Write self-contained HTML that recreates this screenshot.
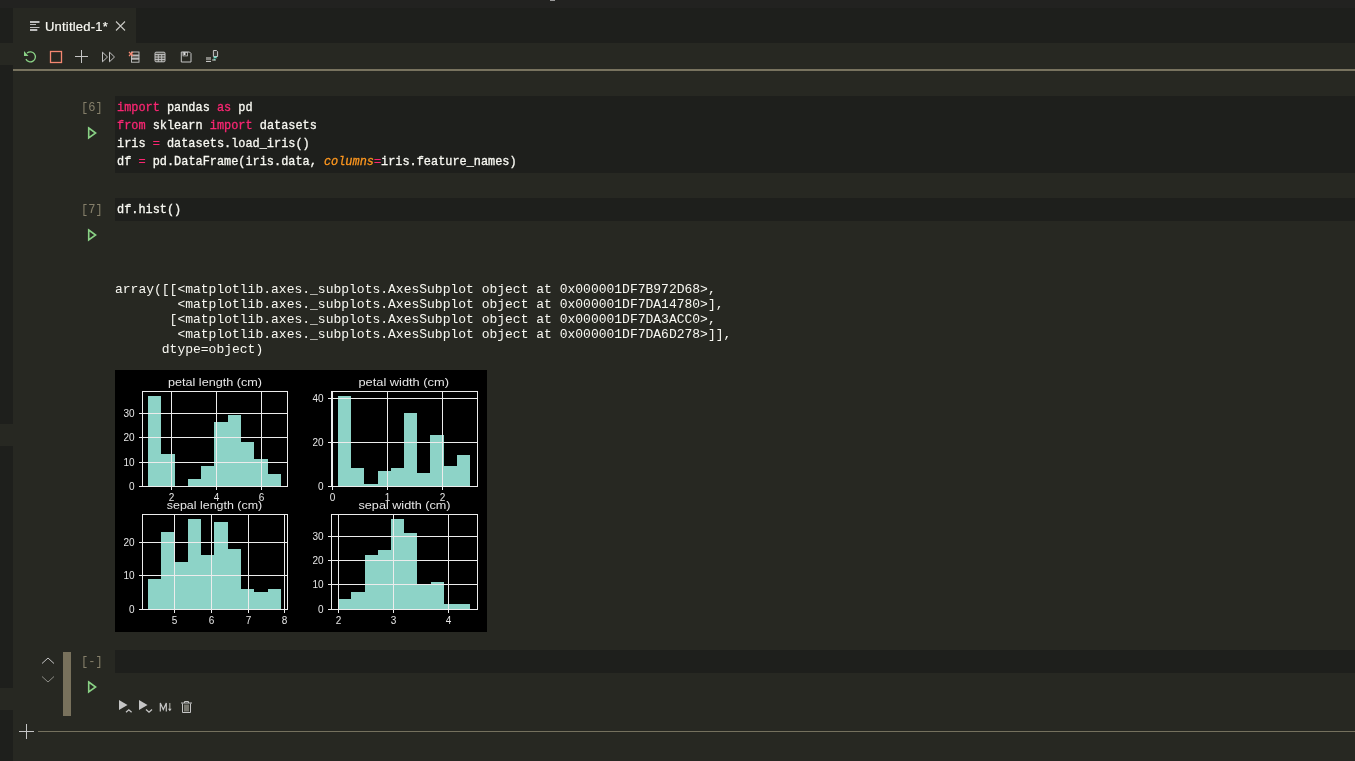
<!DOCTYPE html>
<html><head><meta charset="utf-8"><title>Untitled-1</title>
<style>
html,body{margin:0;padding:0}
body{width:1355px;height:761px;overflow:hidden;position:relative;background:#272822;font-family:"Liberation Sans",sans-serif}
.a{position:absolute}
.t1,.code,.out,.cnt,.chart text{will-change:transform}
.code{position:absolute;font-family:"Liberation Mono",monospace;font-size:11.9px;line-height:18px;color:#f8f8f2;white-space:pre;-webkit-text-stroke:0.3px currentColor}
.k{color:#f92672}
.p{color:#fd971f;font-style:italic}
.out{position:absolute;font-family:"Liberation Mono",monospace;font-size:13px;line-height:15px;color:#f8f8f2;white-space:pre}
.cnt{position:absolute;font-family:"Liberation Mono",monospace;font-size:12px;line-height:14px;color:#857f6a;white-space:pre}
.chart rect{shape-rendering:crispEdges}
.chart text{font-family:"Liberation Sans",sans-serif;font-size:10px;fill:#e6e6e6}
.chart text.t{font-size:11px}
svg{display:block}
.gs{will-change:transform}
</style></head><body>
<!-- title strip -->
<div class="a" style="left:0;top:0;width:1355px;height:8px;background:#222220"></div>
<div class="a" style="left:550px;top:0;width:5px;height:1px;background:#9a9a9a"></div>
<!-- tab bar -->
<div class="a" style="left:0;top:8px;width:1355px;height:35px;background:#1e1f1c"></div>
<div class="a" style="left:13px;top:8px;width:123px;height:35px;background:#272822"></div>
<svg class="a" style="left:30px;top:21px" width="10" height="10"><rect x="0" y="0" width="9.5" height="2" fill="#bdbdbd"/><rect x="0" y="3" width="6" height="1" fill="#bdbdbd"/><rect x="0" y="6" width="9.5" height="1" fill="#bdbdbd"/><rect x="0" y="8" width="7.3" height="2" fill="#bdbdbd"/></svg>
<div class="a t1" style="left:45px;top:17px;font-size:13px;line-height:20px;letter-spacing:0.2px;color:#f8f8f2;-webkit-text-stroke:0.2px currentColor">Untitled-1*</div>
<svg class="a" style="left:115px;top:21px" width="11" height="10"><path d="M1 0.5L10 9.5M10 0.5L1 9.5" stroke="#c8c8c4" stroke-width="1.1" fill="none"/></svg>
<!-- left strip -->
<div class="a" style="left:0;top:8px;width:13px;height:753px;background:#1e1f1c"></div>
<div class="a" style="left:0;top:43px;width:13px;height:22px;background:#272822"></div>
<div class="a" style="left:0;top:424px;width:13px;height:22px;background:#272822"></div>
<div class="a" style="left:0;top:688px;width:13px;height:22px;background:#272822"></div>
<!-- toolbar line -->
<div class="a" style="left:13px;top:69px;width:1342px;height:2px;background:#78735f"></div>
<!-- toolbar icons -->
<svg class="a" style="left:22px;top:49px" width="16" height="16" viewBox="0 0 16 16">
 <path d="M5.1 4.1 A5 5 0 1 1 3.9 10.1" stroke="#89d185" stroke-width="1.3" fill="none"/>
 <path d="M2 2 L2 7 L6.5 7 Z" fill="#89d185"/>
</svg>
<svg class="a" style="left:49px;top:50px" width="14" height="14"><rect x="1.5" y="1.5" width="11" height="11" stroke="#f48771" stroke-width="1.3" fill="none"/></svg>
<svg class="a" style="left:74px;top:49px" width="15" height="15"><rect x="7" y="1" width="1" height="13" fill="#c5c5c5"/><rect x="1" y="7" width="13" height="1" fill="#c5c5c5"/></svg>
<svg class="a" style="left:100px;top:51px" width="17" height="12" viewBox="0 0 17 12"><path d="M2.5 1.2 L7.5 6 L2.5 10.8 Z M9.5 1.2 L14.5 6 L9.5 10.8 Z" stroke="#c5c5c5" stroke-width="1" fill="none"/></svg>
<svg class="a" style="left:128px;top:51px" width="12" height="12" viewBox="0 0 12 12">
 <rect x="3.5" y="1" width="7.5" height="3" stroke="#c5c5c5" stroke-width="0.9" fill="none"/>
 <rect x="3.5" y="4.6" width="7.5" height="3" stroke="#c5c5c5" stroke-width="0.9" fill="#6a6a66"/>
 <rect x="3.5" y="8.2" width="7.5" height="3" stroke="#c5c5c5" stroke-width="0.9" fill="none"/>
 <path d="M1 1 L5 5 M5 1 L1 5" stroke="#f48771" stroke-width="1.3"/>
</svg>
<svg class="a" style="left:154px;top:51px" width="12" height="12" viewBox="0 0 12 12">
 <rect x="1" y="1.2" width="10" height="9.6" rx="1" stroke="#c5c5c5" stroke-width="1" fill="#55554f"/>
 <path d="M1 3.5H11M1 6H11M1 8.5H11M4.3 3.5V10.8M7.7 3.5V10.8" stroke="#c5c5c5" stroke-width="0.9"/>
</svg>
<svg class="a" style="left:180px;top:51px" width="12" height="12" viewBox="0 0 12 12">
 <path d="M1.3 1 H9.5 L11 2.5 V11 H1.3 Z" stroke="#c5c5c5" stroke-width="1" fill="none"/>
 <rect x="3" y="1.3" width="4.5" height="3.6" stroke="#c5c5c5" stroke-width="0.8" fill="none"/>
 <rect x="3.5" y="1.5" width="2" height="2.5" fill="#e0e0e0"/>
</svg>
<svg class="a" style="left:205px;top:49px" width="14" height="14" viewBox="0 0 14 14">
 <path d="M8.4 1.5 H11.5 L12.6 2.6 V7.5 H8.4 Z" stroke="#c5c5c5" stroke-width="1" fill="#3a3a36"/>
 <rect x="1" y="8" width="5" height="3.2" fill="#85857f"/>
 <rect x="1" y="12" width="5" height="1" fill="#c5c5c5"/>
 <path d="M7.8 9.2 L10.2 7 L12.4 9.2 Z" fill="#6fdcc8"/>
 <rect x="7.2" y="10" width="3.6" height="2" fill="#85857f"/>
 <circle cx="9.5" cy="10.5" r="0.8" fill="#6fdcc8"/>
</svg>

<!-- cell 1 -->
<div class="a" style="left:115px;top:96px;width:1240px;height:77px;background:#1e1f1c"></div>
<div class="cnt" style="left:81px;top:101px">[6]</div>
<svg class="a" style="left:87px;top:126px" width="11" height="14" viewBox="0 0 11 14"><path d="M1.7 2 L8.6 7 L1.7 12 Z" stroke="#89d185" stroke-width="1.6" stroke-linejoin="miter" fill="none"/></svg>
<div class="code" style="left:117px;top:99px"><span class="k">import</span> pandas <span class="k">as</span> pd
<span class="k">from</span> sklearn <span class="k">import</span> datasets
iris <span class="k">=</span> datasets.load_iris()
df <span class="k">=</span> pd.DataFrame(iris.data, <span class="p">columns</span><span class="k">=</span>iris.feature_names)</div>

<!-- cell 2 -->
<div class="a" style="left:115px;top:198px;width:1240px;height:23px;background:#1e1f1c"></div>
<div class="cnt" style="left:81px;top:203px">[7]</div>
<svg class="a" style="left:87px;top:228px" width="11" height="14" viewBox="0 0 11 14"><path d="M1.7 2 L8.6 7 L1.7 12 Z" stroke="#89d185" stroke-width="1.6" stroke-linejoin="miter" fill="none"/></svg>
<div class="code" style="left:117px;top:201px">df.hist()</div>

<div class="out" style="left:115px;top:282px">array([[&lt;matplotlib.axes._subplots.AxesSubplot object at 0x000001DF7B972D68&gt;,
        &lt;matplotlib.axes._subplots.AxesSubplot object at 0x000001DF7DA14780&gt;],
       [&lt;matplotlib.axes._subplots.AxesSubplot object at 0x000001DF7DA3ACC0&gt;,
        &lt;matplotlib.axes._subplots.AxesSubplot object at 0x000001DF7DA6D278&gt;]],
      dtype=object)</div>

<div class="a" style="left:115px;top:370px"><svg class="chart" width="372" height="262" viewBox="115 370 372 262" shape-rendering="crispEdges"><rect x="115" y="370" width="372" height="262" fill="#000"/><g font-family="Liberation Sans, sans-serif" font-size="10" fill="#e8e8e8" shape-rendering="auto"><rect x="148.00" y="396.00" width="13.00" height="91.00" fill="#8dd3c7"/><rect x="161.00" y="454.00" width="14.00" height="33.00" fill="#8dd3c7"/><rect x="188.00" y="479.00" width="13.00" height="8.00" fill="#8dd3c7"/><rect x="201.00" y="466.00" width="13.00" height="21.00" fill="#8dd3c7"/><rect x="214.00" y="422.00" width="14.00" height="65.00" fill="#8dd3c7"/><rect x="228.00" y="415.00" width="13.00" height="72.00" fill="#8dd3c7"/><rect x="241.00" y="442.00" width="13.00" height="45.00" fill="#8dd3c7"/><rect x="254.00" y="459.00" width="14.00" height="28.00" fill="#8dd3c7"/><rect x="268.00" y="474.00" width="13.00" height="13.00" fill="#8dd3c7"/><rect x="171" y="391" width="1" height="96" fill="#ececec"/><rect x="171" y="486" width="1" height="4" fill="#ececec"/><text x="171.5" y="501" text-anchor="middle">2</text><rect x="216" y="391" width="1" height="96" fill="#ececec"/><rect x="216" y="486" width="1" height="4" fill="#ececec"/><text x="216.5" y="501" text-anchor="middle">4</text><rect x="261" y="391" width="1" height="96" fill="#ececec"/><rect x="261" y="486" width="1" height="4" fill="#ececec"/><text x="261.5" y="501" text-anchor="middle">6</text><rect x="142" y="486" width="146" height="1" fill="#ececec"/><rect x="139" y="486" width="4" height="1" fill="#ececec"/><text x="134.5" y="490" text-anchor="end">0</text><rect x="142" y="462" width="146" height="1" fill="#ececec"/><rect x="139" y="462" width="4" height="1" fill="#ececec"/><text x="134.5" y="466" text-anchor="end">10</text><rect x="142" y="437" width="146" height="1" fill="#ececec"/><rect x="139" y="437" width="4" height="1" fill="#ececec"/><text x="134.5" y="441" text-anchor="end">20</text><rect x="142" y="413" width="146" height="1" fill="#ececec"/><rect x="139" y="413" width="4" height="1" fill="#ececec"/><text x="134.5" y="417" text-anchor="end">30</text><rect x="142" y="391" width="1" height="96" fill="#ececec"/><rect x="287" y="391" width="1" height="96" fill="#ececec"/><rect x="142" y="391" width="146" height="1" fill="#ececec"/><rect x="142" y="486" width="146" height="1" fill="#ececec"/><text class="t" x="215" y="386" text-anchor="middle" textLength="94" lengthAdjust="spacingAndGlyphs">petal length (cm)</text><rect x="338.00" y="396.00" width="13.00" height="91.00" fill="#8dd3c7"/><rect x="351.00" y="468.00" width="13.00" height="19.00" fill="#8dd3c7"/><rect x="364.00" y="484.00" width="14.00" height="3.00" fill="#8dd3c7"/><rect x="378.00" y="471.00" width="13.00" height="16.00" fill="#8dd3c7"/><rect x="391.00" y="468.00" width="13.00" height="19.00" fill="#8dd3c7"/><rect x="404.00" y="413.00" width="13.00" height="74.00" fill="#8dd3c7"/><rect x="417.00" y="473.00" width="13.00" height="14.00" fill="#8dd3c7"/><rect x="430.00" y="435.00" width="14.00" height="52.00" fill="#8dd3c7"/><rect x="444.00" y="466.00" width="13.00" height="21.00" fill="#8dd3c7"/><rect x="457.00" y="455.00" width="13.00" height="32.00" fill="#8dd3c7"/><rect x="332" y="391" width="1" height="96" fill="#ececec"/><rect x="332" y="486" width="1" height="4" fill="#ececec"/><text x="332.5" y="501" text-anchor="middle">0</text><rect x="387" y="391" width="1" height="96" fill="#ececec"/><rect x="387" y="486" width="1" height="4" fill="#ececec"/><text x="387.5" y="501" text-anchor="middle">1</text><rect x="442" y="391" width="1" height="96" fill="#ececec"/><rect x="442" y="486" width="1" height="4" fill="#ececec"/><text x="442.5" y="501" text-anchor="middle">2</text><rect x="331" y="486" width="147" height="1" fill="#ececec"/><rect x="328" y="486" width="4" height="1" fill="#ececec"/><text x="323.5" y="490" text-anchor="end">0</text><rect x="331" y="442" width="147" height="1" fill="#ececec"/><rect x="328" y="442" width="4" height="1" fill="#ececec"/><text x="323.5" y="446" text-anchor="end">20</text><rect x="331" y="398" width="147" height="1" fill="#ececec"/><rect x="328" y="398" width="4" height="1" fill="#ececec"/><text x="323.5" y="402" text-anchor="end">40</text><rect x="331" y="391" width="1" height="96" fill="#ececec"/><rect x="477" y="391" width="1" height="96" fill="#ececec"/><rect x="331" y="391" width="147" height="1" fill="#ececec"/><rect x="331" y="486" width="147" height="1" fill="#ececec"/><text class="t" x="403.7" y="386" text-anchor="middle" textLength="90.5" lengthAdjust="spacingAndGlyphs">petal width (cm)</text><rect x="148.00" y="579.00" width="13.00" height="31.00" fill="#8dd3c7"/><rect x="161.00" y="532.00" width="14.00" height="78.00" fill="#8dd3c7"/><rect x="175.00" y="562.00" width="13.00" height="48.00" fill="#8dd3c7"/><rect x="188.00" y="519.00" width="13.00" height="91.00" fill="#8dd3c7"/><rect x="201.00" y="555.00" width="13.00" height="55.00" fill="#8dd3c7"/><rect x="214.00" y="522.00" width="14.00" height="88.00" fill="#8dd3c7"/><rect x="228.00" y="549.00" width="13.00" height="61.00" fill="#8dd3c7"/><rect x="241.00" y="589.00" width="13.00" height="21.00" fill="#8dd3c7"/><rect x="254.00" y="592.00" width="14.00" height="18.00" fill="#8dd3c7"/><rect x="268.00" y="589.00" width="13.00" height="21.00" fill="#8dd3c7"/><rect x="174" y="514" width="1" height="96" fill="#ececec"/><rect x="174" y="609" width="1" height="4" fill="#ececec"/><text x="174.5" y="624" text-anchor="middle">5</text><rect x="211" y="514" width="1" height="96" fill="#ececec"/><rect x="211" y="609" width="1" height="4" fill="#ececec"/><text x="211.5" y="624" text-anchor="middle">6</text><rect x="248" y="514" width="1" height="96" fill="#ececec"/><rect x="248" y="609" width="1" height="4" fill="#ececec"/><text x="248.5" y="624" text-anchor="middle">7</text><rect x="284" y="514" width="1" height="96" fill="#ececec"/><rect x="284" y="609" width="1" height="4" fill="#ececec"/><text x="284.5" y="624" text-anchor="middle">8</text><rect x="142" y="609" width="146" height="1" fill="#ececec"/><rect x="139" y="609" width="4" height="1" fill="#ececec"/><text x="134.5" y="613" text-anchor="end">0</text><rect x="142" y="575" width="146" height="1" fill="#ececec"/><rect x="139" y="575" width="4" height="1" fill="#ececec"/><text x="134.5" y="579" text-anchor="end">10</text><rect x="142" y="542" width="146" height="1" fill="#ececec"/><rect x="139" y="542" width="4" height="1" fill="#ececec"/><text x="134.5" y="546" text-anchor="end">20</text><rect x="142" y="514" width="1" height="96" fill="#ececec"/><rect x="287" y="514" width="1" height="96" fill="#ececec"/><rect x="142" y="514" width="146" height="1" fill="#ececec"/><rect x="142" y="609" width="146" height="1" fill="#ececec"/><text class="t" x="214.5" y="509" text-anchor="middle" textLength="95.5" lengthAdjust="spacingAndGlyphs">sepal length (cm)</text><rect x="338.00" y="599.00" width="13.00" height="11.00" fill="#8dd3c7"/><rect x="351.00" y="592.00" width="14.00" height="18.00" fill="#8dd3c7"/><rect x="365.00" y="555.00" width="13.00" height="55.00" fill="#8dd3c7"/><rect x="378.00" y="550.00" width="13.00" height="60.00" fill="#8dd3c7"/><rect x="391.00" y="519.00" width="13.00" height="91.00" fill="#8dd3c7"/><rect x="404.00" y="533.00" width="13.00" height="77.00" fill="#8dd3c7"/><rect x="417.00" y="585.00" width="14.00" height="25.00" fill="#8dd3c7"/><rect x="431.00" y="582.00" width="13.00" height="28.00" fill="#8dd3c7"/><rect x="444.00" y="604.00" width="13.00" height="6.00" fill="#8dd3c7"/><rect x="457.00" y="604.00" width="13.00" height="6.00" fill="#8dd3c7"/><rect x="338" y="514" width="1" height="96" fill="#ececec"/><rect x="338" y="609" width="1" height="4" fill="#ececec"/><text x="338.5" y="624" text-anchor="middle">2</text><rect x="393" y="514" width="1" height="96" fill="#ececec"/><rect x="393" y="609" width="1" height="4" fill="#ececec"/><text x="393.5" y="624" text-anchor="middle">3</text><rect x="448" y="514" width="1" height="96" fill="#ececec"/><rect x="448" y="609" width="1" height="4" fill="#ececec"/><text x="448.5" y="624" text-anchor="middle">4</text><rect x="331" y="609" width="147" height="1" fill="#ececec"/><rect x="328" y="609" width="4" height="1" fill="#ececec"/><text x="323.5" y="613" text-anchor="end">0</text><rect x="331" y="584" width="147" height="1" fill="#ececec"/><rect x="328" y="584" width="4" height="1" fill="#ececec"/><text x="323.5" y="588" text-anchor="end">10</text><rect x="331" y="560" width="147" height="1" fill="#ececec"/><rect x="328" y="560" width="4" height="1" fill="#ececec"/><text x="323.5" y="564" text-anchor="end">20</text><rect x="331" y="536" width="147" height="1" fill="#ececec"/><rect x="328" y="536" width="4" height="1" fill="#ececec"/><text x="323.5" y="540" text-anchor="end">30</text><rect x="331" y="514" width="1" height="96" fill="#ececec"/><rect x="477" y="514" width="1" height="96" fill="#ececec"/><rect x="331" y="514" width="147" height="1" fill="#ececec"/><rect x="331" y="609" width="147" height="1" fill="#ececec"/><text class="t" x="404.5" y="509" text-anchor="middle" textLength="92" lengthAdjust="spacingAndGlyphs">sepal width (cm)</text></g></svg></div>

<!-- cell 3 -->
<svg class="a" style="left:40px;top:655px" width="16" height="30" viewBox="0 0 16 30"><path d="M2 8.5 L8 3 L14 8.5" stroke="#c5c5c5" stroke-width="1" fill="none"/><path d="M2 21.5 L8 27 L14 21.5" stroke="#8c8c86" stroke-width="1" fill="none"/></svg>
<div class="a" style="left:63px;top:652px;width:8px;height:64px;background:#78715c"></div>
<div class="cnt" style="left:81px;top:655px">[-]</div>
<div class="a" style="left:115px;top:650px;width:1240px;height:23px;background:#1e1f1c"></div>
<svg class="a" style="left:87px;top:680px" width="11" height="14" viewBox="0 0 11 14"><path d="M1.7 2 L8.6 7 L1.7 12 Z" stroke="#89d185" stroke-width="1.6" stroke-linejoin="miter" fill="none"/></svg>
<svg class="a" style="left:118px;top:699px" width="16" height="15" viewBox="0 0 16 15"><path d="M1 1 L9.5 6 L1 11 Z" fill="#c5c5c5"/><path d="M8 13.3 L10.8 10.8 L13.6 13.3" stroke="#c5c5c5" stroke-width="1.3" fill="none"/></svg>
<svg class="a" style="left:138px;top:699px" width="16" height="15" viewBox="0 0 16 15"><path d="M1 1 L9.5 6 L1 11 Z" fill="#c5c5c5"/><path d="M8 10.5 L11 13.2 L14 10.5" stroke="#c5c5c5" stroke-width="1.3" fill="none"/></svg>
<svg class="a" style="left:159px;top:702px" width="14" height="10" viewBox="0 0 14 10"><path d="M1.3 9.5 V1 L4.3 7.5 L7.3 1 V9.5" stroke="#c5c5c5" stroke-width="1.2" fill="none" stroke-linejoin="miter"/><path d="M10.8 1 V8.5" stroke="#a0a09a" stroke-width="1.2"/><path d="M9 6.8 L10.8 9.3 L12.6 6.8 Z" fill="#c5c5c5"/></svg>
<svg class="a" style="left:180px;top:700px" width="13" height="14" viewBox="0 0 13 14">
 <path d="M1 3 H12 M4.5 3 V1.5 H8.5 V3" stroke="#c5c5c5" stroke-width="1" fill="none"/>
 <path d="M2.5 3.5 V12.5 H10.5 V3.5" stroke="#c5c5c5" stroke-width="1" fill="none"/>
 <rect x="4" y="4.5" width="5" height="7" fill="#77776f"/>
</svg>
<!-- add cell -->
<svg class="a" style="left:18px;top:723px" width="17" height="17"><rect x="8" y="1" width="1" height="15" fill="#c5c5c5"/><rect x="1" y="8" width="15" height="1" fill="#c5c5c5"/></svg>
<div class="a" style="left:38px;top:731px;width:1317px;height:1px;background:#75715e"></div>
</body></html>
